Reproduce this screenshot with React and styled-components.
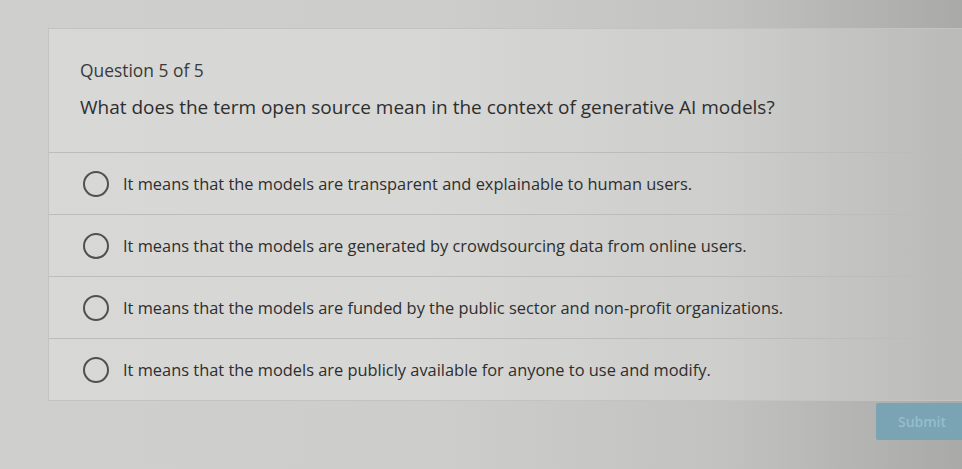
import styled, { createGlobalStyle } from "styled-components";

const GlobalStyle = createGlobalStyle`
  html, body {
    margin: 0;
    height: 100%;
  }
  body {
    overflow: hidden;
    font-family: "Open Sans", "Noto Sans", sans-serif;
    color: #333333;
    background: linear-gradient(90deg, #cfcfcd 0%, #cdcdcb 45%, #c2c2c0 75%, #a9a9a7 100%);
  }
`;

const options = [
  "It means that the models are transparent and explainable to human users.",
  "It means that the models are generated by crowdsourcing data from online users.",
  "It means that the models are funded by the public sector and non-profit organizations.",
  "It means that the models are publicly available for anyone to use and modify.",
];

function App() {
  return (
    <>
      <GlobalStyle />
      <Page>
        <Card>
          <Header>
            <Counter>Question 5 of 5</Counter>
            <Prompt>What does the term open source mean in the context of generative AI models?</Prompt>
          </Header>

          {options.map((text) => (
            <Option key={text}>
              <Radio type="radio" name="answer" />
              <OptionText>{text}</OptionText>
            </Option>
          ))}
        </Card>

        <Footer>
          <SubmitButton disabled>Submit</SubmitButton>
        </Footer>
      </Page>
    </>
  );
}

const Page = styled.div`
  width: 920px;
  padding: 28px 0 0 48px;
`;

const Card = styled.section`
  border: 1px solid #c3c3c1;
  background: rgba(255, 255, 255, 0.2);
`;

const Header = styled.header`
  height: 123px;
  box-sizing: border-box;
  padding: 29px 31px 0;
`;

const Counter = styled.div`
  font-size: 17.4px;
  line-height: 24px;
  color: #3a3a3a;
`;

const Prompt = styled.h2`
  margin: 12px 0 0;
  font-size: 19px;
  font-weight: 400;
  line-height: 26px;
  color: #2e2e2e;
`;

const Option = styled.label`
  display: flex;
  align-items: center;
  gap: 14px;
  height: 61px;
  padding-left: 34px;
  border-top: 1px solid #bcbcba;
`;

const Radio = styled.input`
  appearance: none;
  margin: 0;
  width: 26px;
  height: 26px;
  box-sizing: border-box;
  border: 2px solid #505050;
  border-radius: 50%;
  background: transparent;
`;

const OptionText = styled.span`
  font-size: 16.4px;
  color: #2e2e2e;
`;

const Footer = styled.div`
  display: flex;
  justify-content: flex-end;
  margin-top: 2px;
`;

const SubmitButton = styled.button`
  width: 92px;
  height: 37px;
  border: none;
  border-radius: 2px;
  background: #7aa3b3;
  color: #98bccb;
  font-family: "Open Sans", "Noto Sans", sans-serif;
  font-size: 14px;
  font-weight: 600;
`;

export default App;
